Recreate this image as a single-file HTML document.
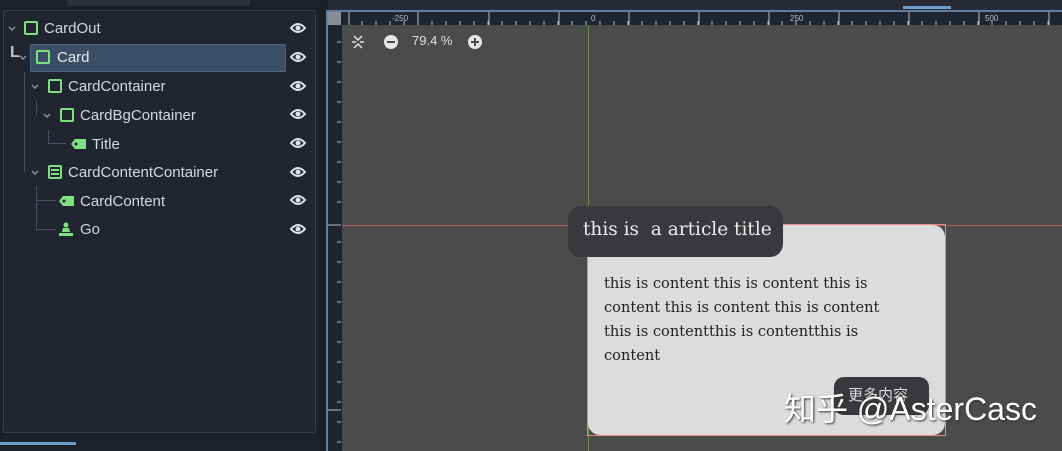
<!DOCTYPE html><html><head><meta charset="utf-8"><style>
*{margin:0;padding:0;box-sizing:border-box}
body{width:1062px;height:451px;overflow:hidden;background:#1c2028;position:relative;font-family:"Liberation Sans","Noto Sans CJK SC",sans-serif}
.a{position:absolute}
.row{position:absolute;left:0;width:315px;height:26px;color:#d4d8de;font-size:15px;line-height:28px}
.ic{position:absolute;top:6px;width:14px;height:14px;border:2px solid #7fe07f;border-radius:2px}
.ln{position:absolute;background:#4a5060}
</style></head><body>
<div class="a" style="left:67px;top:0;width:183px;height:6px;background:#2b303b"></div>
<div class="a" style="left:3px;top:10px;width:313px;height:423px;background:#212530;border:1px solid #383e4b;border-radius:3px"></div>
<div class="a" style="left:0;top:442px;width:76px;height:3px;background:#6d9cc8"></div>
<div class="a" style="left:30px;top:44px;width:256px;height:28px;background:#3a4e66;border:1px solid #50657d;border-radius:2px"></div>
<div class="ln" style="left:24px;top:72px;width:1px;height:100px"></div>
<div class="ln" style="left:36px;top:101px;width:1px;height:14px"></div>
<div class="ln" style="left:48px;top:130px;width:1px;height:14px"></div>
<div class="ln" style="left:48px;top:143px;width:18px;height:1px"></div>
<div class="ln" style="left:36px;top:186px;width:1px;height:44px"></div>
<div class="ln" style="left:36px;top:200px;width:20px;height:1px"></div>
<div class="ln" style="left:36px;top:229px;width:20px;height:1px"></div>
<div class="a" style="left:10px;top:44px;color:#c0c5cc;font-size:16px;font-weight:bold">L</div>
<svg class="a" style="left:0;top:0" width="60" height="240"><g fill="none" stroke="#8a909a" stroke-width="1.5"><path d="M9 27l3 3 3-3"/><path d="M20 56l3 3 3-3"/><path d="M32 85l3 3 3-3"/><path d="M44 114l3 3 3-3"/><path d="M32 171l3 3 3-3"/></g></svg>
<div class="row" style="top:15px"><div class="ic" style="left:24px"></div><span style="position:absolute;left:44px">CardOut</span></div>
<div class="row" style="top:44px"><div class="ic" style="left:36px"></div><span style="position:absolute;left:57px;color:#e8ecf0">Card</span></div>
<div class="row" style="top:73px"><div class="ic" style="left:48px"></div><span style="position:absolute;left:68px">CardContainer</span></div>
<div class="row" style="top:102px"><div class="ic" style="left:60px"></div><span style="position:absolute;left:80px">CardBgContainer</span></div>
<div class="row" style="top:131px"><svg class="a" style="left:71px;top:8px" width="15" height="10"><path d="M4 0h11v10H4L0 5z" fill="#7fe07f"/><circle cx="5" cy="5" r="1.5" fill="#212530"/></svg><span style="position:absolute;left:92px">Title</span></div>
<div class="row" style="top:159px"><div class="ic" style="left:48px"></div><div class="a" style="left:51px;top:10px;width:8px;height:2px;background:#7fe07f"></div><div class="a" style="left:51px;top:14px;width:8px;height:2px;background:#7fe07f"></div><span style="position:absolute;left:68px">CardContentContainer</span></div>
<div class="row" style="top:188px"><svg class="a" style="left:59px;top:8px" width="15" height="10"><path d="M4 0h11v10H4L0 5z" fill="#7fe07f"/><circle cx="5" cy="5" r="1.5" fill="#212530"/></svg><span style="position:absolute;left:80px">CardContent</span></div>
<div class="row" style="top:216px"><svg class="a" style="left:59px;top:6px" width="14" height="14"><circle cx="7" cy="3" r="2.5" fill="#7fe07f"/><path d="M4 6h6l1 4H3z M0 11h14v3H0z" fill="#7fe07f"/></svg><span style="position:absolute;left:80px">Go</span></div>
<svg class="a" style="left:289px;top:0" width="18" height="240"><g fill="none" stroke="#dfe3e8" stroke-width="2">
<path d="M2 28q7-8 14 0q-7 8-14 0z"/><path d="M2 57q7-8 14 0q-7 8-14 0z"/><path d="M2 86q7-8 14 0q-7 8-14 0z"/><path d="M2 114q7-8 14 0q-7 8-14 0z"/><path d="M2 143q7-8 14 0q-7 8-14 0z"/><path d="M2 172q7-8 14 0q-7 8-14 0z"/><path d="M2 200q7-8 14 0q-7 8-14 0z"/><path d="M2 229q7-8 14 0q-7 8-14 0z"/></g>
<g fill="#dfe3e8"><circle cx="9" cy="28" r="2.5"/><circle cx="9" cy="57" r="2.5"/><circle cx="9" cy="86" r="2.5"/><circle cx="9" cy="114" r="2.5"/><circle cx="9" cy="143" r="2.5"/><circle cx="9" cy="172" r="2.5"/><circle cx="9" cy="200" r="2.5"/><circle cx="9" cy="229" r="2.5"/></g></svg>
<div class="a" style="left:320px;top:0;width:8px;height:451px;background:#1a1e25"></div>
<div class="a" style="left:328px;top:0;width:734px;height:10px;background:#262b35"></div>
<div class="a" style="left:903px;top:6px;width:48px;height:3px;background:#6d9cc8"></div>
<div class="a" style="left:326px;top:10px;width:736px;height:2px;background:#5f7fa0"></div>
<div class="a" style="left:328px;top:12px;width:734px;height:13px;background:#1f2530"></div>
<div class="a" style="left:328px;top:12px;width:14px;height:439px;background:#1f2530"></div>
<div class="a" style="left:326px;top:12px;width:2px;height:439px;background:#5f7fa0"></div>
<div class="a" style="left:328px;top:12px;width:13px;height:13px;background:#8a8e94"></div>
<div class="a" style="left:342px;top:25px;width:720px;height:426px;background:#4b4b4b"></div>
<svg class="a" style="left:328px;top:12px" width="734" height="439"><g stroke="#b9bec6" stroke-width="1">
<path d="M34 9v4M48 9v4M62 9v4M76 9v4M90 9v4M104 9v4M118 9v4M132 9v4M146 9v4M160 9v4M174 9v4M188 9v4M202 9v4M216 9v4M230 9v4M244 9v4M258 9v4M272 9v4M286 9v4M300 9v4M314 9v4M328 9v4M342 9v4M356 9v4M370 9v4M384 9v4M398 9v4M412 9v4M426 9v4M440 9v4M454 9v4M468 9v4M482 9v4M496 9v4M510 9v4M524 9v4M538 9v4M552 9v4M566 9v4M580 9v4M594 9v4M608 9v4M622 9v4M636 9v4M650 9v4M664 9v4M678 9v4M692 9v4M706 9v4M720 9v4"/>
<path d="M21 0v13M90 0v13M161 0v13M231 0v13M301 0v13M371 0v13M441 0v13M511 0v13M581 0v13M651 0v13M721 0v13"/>
<path d="M9 30h4M9 50h4M9 70h4M9 90h4M9 110h4M9 130h4M9 150h4M9 170h4M9 190h4M9 230h4M9 250h4M9 270h4M9 290h4M9 310h4M9 330h4M9 350h4M9 370h4M9 390h4M9 410h4M9 430h4M0 213h13M0 398h13"/>
</g><g fill="#b9bec6" font-size="8" font-family="Liberation Sans"><text x="64" y="9">-250</text><text x="263" y="9">0</text><text x="462" y="9">250</text><text x="657" y="9">500</text></g></svg>
<div class="a" style="left:588px;top:25px;width:1px;height:426px;background:#6f8a4a"></div>
<div class="a" style="left:342px;top:225px;width:720px;height:1px;background:#b05a62"></div>
<svg class="a" style="left:352px;top:34px" width="140" height="16"><g fill="#e6e6e6"><path d="M2 2l4 4 4-4M2 14l4-4 4 4M0 8h4M8 8h4" stroke="#e6e6e6" fill="none" stroke-width="1.5"/>
<circle cx="39" cy="8" r="7"/><circle cx="123" cy="8" r="7"/></g><rect x="35" y="7" width="8" height="2" fill="#4b4b4b"/><rect x="119" y="7" width="8" height="2" fill="#4b4b4b"/><rect x="122" y="4" width="2" height="8" fill="#4b4b4b"/></svg>
<div class="a" style="left:412px;top:33px;color:#e0e0e0;font-size:13px">79.4 %</div>
<div class="a" style="left:587px;top:224px;width:359px;height:212px;border:1.5px solid #e0907a"></div>
<div class="a" style="left:588px;top:225px;width:357px;height:210px;background:#dcdcdc;border-radius:12px"></div>
<div class="a" style="left:568px;top:206px;width:215px;height:51px;background:#38383d;border-radius:13px"></div>
<div class="a" style="left:583px;top:219px;color:#ececec;font-size:18.5px;font-family:'DejaVu Serif',serif;white-space:nowrap">this is&nbsp; a article title</div>
<div class="a" style="left:604px;top:272px;width:290px;color:#222;font-size:14.6px;line-height:24px;font-family:'DejaVu Serif',serif">this is content this is content this is content this is content this is content this is contentthis is contentthis is content</div>
<div class="a" style="left:834px;top:377px;width:95px;height:38px;background:#38383d;border-radius:10px;color:#ddd;font-size:15px;line-height:38px;padding-left:14px">更多内容</div>
<div class="a" style="left:784px;top:384px;color:#fff;font-size:32px;text-shadow:1px 1px 2px #333;white-space:nowrap">知乎 @AsterCasc</div>
</body></html>
